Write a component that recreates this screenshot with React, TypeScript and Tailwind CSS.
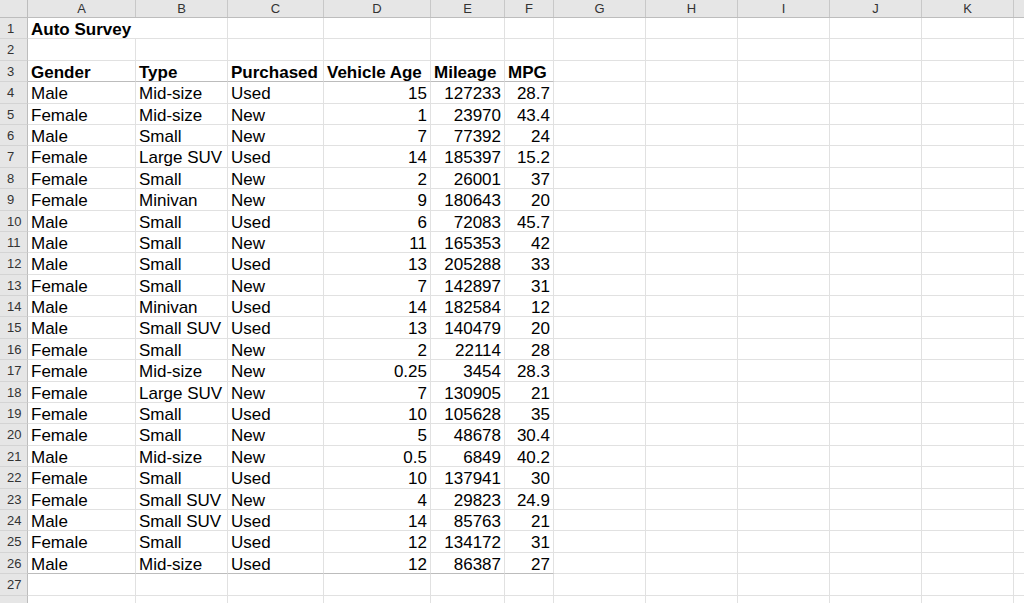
const cols = ["A","B","C","D","E","F","G","H","I","J","K"];
const widths = [108,92,96,107,74,49,92,92,92,92,92];
const data: (string|number)[][] = [
["Male","Mid-size","Used",15,127233,28.7],
["Female","Mid-size","New",1,23970,43.4],
["Male","Small","New",7,77392,24],
["Female","Large SUV","Used",14,185397,15.2],
["Female","Small","New",2,26001,37],
["Female","Minivan","New",9,180643,20],
["Male","Small","Used",6,72083,45.7],
["Male","Small","New",11,165353,42],
["Male","Small","Used",13,205288,33],
["Female","Small","New",7,142897,31],
["Male","Minivan","Used",14,182584,12],
["Male","Small SUV","Used",13,140479,20],
["Female","Small","New",2,22114,28],
["Female","Mid-size","New",0.25,3454,28.3],
["Female","Large SUV","New",7,130905,21],
["Female","Small","Used",10,105628,35],
["Female","Small","New",5,48678,30.4],
["Male","Mid-size","New",0.5,6849,40.2],
["Female","Small","Used",10,137941,30],
["Female","Small SUV","New",4,29823,24.9],
["Male","Small SUV","Used",14,85763,21],
["Female","Small","Used",12,134172,31],
["Male","Mid-size","Used",12,86387,27],
];
export default function App(){
  const rows: {cells:(string|number|null)[], bold?:boolean}[] = [
    {cells:["Auto Survey"],bold:true},
    {cells:[]},
    {cells:["Gender","Type","Purchased","Vehicle Age","Mileage","MPG"],bold:true},
    ...data.map(d=>({cells:d})),
    {cells:[]},
    {cells:[]},
  ];
  return (
    <div className="w-[1024px] h-[603px] overflow-hidden bg-white text-[17px] text-black" style={{fontFamily:'"Liberation Sans", Arial, sans-serif'}}>
      <div className="flex h-[18px] bg-[#e6e6e6] border-b border-[#bdbdbd]">
        <div className="w-[28px] shrink-0 border-r border-[#bdbdbd]"></div>
        {cols.map((c,i)=>(
          <div key={c} style={{width:widths[i]}} className="shrink-0 border-r border-[#c8c8c8] text-center text-[13px] leading-[17px] text-[#333]">{c}</div>
        ))}
        <div className="flex-1"></div>
      </div>
      {rows.map((r,ri)=>(
        <div key={ri} className="flex h-[21.4px]">
          <div className="w-[28px] shrink-0 bg-[#e6e6e6] border-r border-b border-[#bdbdbd] border-b-[#d4d4d4] text-[13px] text-[#333] pl-[7px] leading-[22px]">{ri<27?ri+1:""}</div>
          {cols.map((c,i)=>{
            const v = r.cells[i];
            const num = typeof v==="number";
            const span = ri===0 && i===0;
            const dark = (ri===2||ri===25) && i<6;
            return (
              <div key={c} style={{width:widths[i]}} className={`shrink-0 border-b ${dark?"border-b-[#bcbcbc]":"border-b-[#e1e1e1]"} ${span?"":"border-r border-r-[#e1e1e1]"} leading-[23px] whitespace-nowrap ${span?"overflow-visible":"overflow-hidden"} ${num?"text-right pr-[3px]":"pl-[3px]"} ${r.bold?"font-bold":""}`}>
                {v ?? ""}
              </div>
            );
          })}
          <div className="flex-1 border-b border-b-[#e1e1e1]"></div>
        </div>
      ))}
    </div>
  );
}
